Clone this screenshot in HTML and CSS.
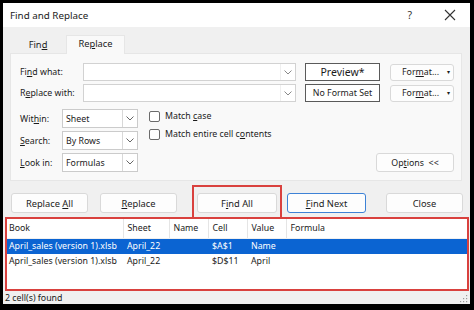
FILE: index.html
```
<!DOCTYPE html>
<html lang="en">
<head>
    <meta charset="UTF-8">
    <title>Find and Replace</title>
    <link rel="stylesheet" href="styles.css">
</head>
<body>
<div class="dialog">
    <div class="titlebar">
        <span class="title">Find and Replace</span>
        <span class="tb-help">?</span>
        <span class="tb-close">
            <svg width="12" height="12" viewBox="0 0 12 12"><path d="M1 1 L11 11 M11 1 L1 11" stroke="#333" stroke-width="1.1" fill="none"/></svg>
        </span>
    </div>

    <div class="tabs">
        <div class="tab">Fin<u>d</u></div>
        <div class="tab active">Re<u>p</u>lace</div>
    </div>

    <div class="panel">
        <div class="field-row">
            <label class="lbl">Fi<u>n</u>d what:</label>
            <div class="combo">
                <span class="combo-text"></span>
                <span class="combo-arrow"><svg width="8" height="5" viewBox="0 0 8 5"><path d="M0.5 0.5 L4 4 L7.5 0.5" stroke="#888" fill="none"/></svg></span>
            </div>
            <div class="fmt-box preview"><span>Preview*</span></div>
            <div class="btn fmt-btn"><span>For<u>m</u>at...</span><span class="caret">&#9662;</span></div>
        </div>
        <div class="field-row">
            <label class="lbl">R<u>e</u>place with:</label>
            <div class="combo">
                <span class="combo-text"></span>
                <span class="combo-arrow"><svg width="8" height="5" viewBox="0 0 8 5"><path d="M0.5 0.5 L4 4 L7.5 0.5" stroke="#888" fill="none"/></svg></span>
            </div>
            <div class="fmt-box"><span>No Format Set</span></div>
            <div class="btn fmt-btn"><span>For<u>m</u>at...</span><span class="caret">&#9662;</span></div>
        </div>

        <div class="opts">
            <label class="lbl">Wit<u>h</u>in:</label>
            <div class="select"><span>Sheet</span><span class="sel-arrow"><svg width="8" height="5" viewBox="0 0 8 5"><path d="M0.5 0.5 L4 4 L7.5 0.5" stroke="#666" fill="none"/></svg></span></div>
            <div class="checks">
                <div class="check"><span class="box"></span><span>Match <u>c</u>ase</span></div>
                <div class="check"><span class="box"></span><span>Match entire cell c<u>o</u>ntents</span></div>
            </div>

            <label class="lbl"><u>S</u>earch:</label>
            <div class="select"><span>By Rows</span><span class="sel-arrow"><svg width="8" height="5" viewBox="0 0 8 5"><path d="M0.5 0.5 L4 4 L7.5 0.5" stroke="#666" fill="none"/></svg></span></div>

            <label class="lbl"><u>L</u>ook in:</label>
            <div class="select"><span>Formulas</span><span class="sel-arrow"><svg width="8" height="5" viewBox="0 0 8 5"><path d="M0.5 0.5 L4 4 L7.5 0.5" stroke="#666" fill="none"/></svg></span></div>
            <div class="btn options-btn"><span>Op<u>t</u>ions &nbsp;&lt;&lt;</span></div>
        </div>
    </div>

    <div class="actions">
        <div class="btn act"><span>Replace <u>A</u>ll</span></div>
        <div class="btn act"><span><u>R</u>eplace</span></div>
        <div class="highlight">
            <div class="btn act"><span>F<u>i</u>nd All</span></div>
        </div>
        <div class="btn act default"><span><u>F</u>ind Next</span></div>
        <div class="btn act close"><span>Close</span></div>
    </div>

    <div class="results">
        <table class="found">
            <thead>
                <tr>
                    <th class="c-book">Book</th>
                    <th class="c-sheet">Sheet</th>
                    <th class="c-name">Name</th>
                    <th class="c-cell">Cell</th>
                    <th class="c-value">Value</th>
                    <th>Formula</th>
                </tr>
            </thead>
            <tbody>
                <tr class="selected">
                    <td>April_sales (version 1).xlsb</td>
                    <td>April_22</td>
                    <td></td>
                    <td>$A$1</td>
                    <td>Name</td>
                    <td></td>
                </tr>
                <tr>
                    <td>April_sales (version 1).xlsb</td>
                    <td>April_22</td>
                    <td></td>
                    <td>$D$11</td>
                    <td>April</td>
                    <td></td>
                </tr>
            </tbody>
        </table>
    </div>

    <div class="status">
        <span>2 cell(s) found</span>
        <svg class="grip" width="8" height="8" viewBox="0 0 8 8">
            <rect x="6" y="0" width="1.2" height="1.2" fill="#999"/>
            <rect x="3" y="3" width="1.2" height="1.2" fill="#999"/>
            <rect x="6" y="3" width="1.2" height="1.2" fill="#999"/>
            <rect x="0" y="6" width="1.2" height="1.2" fill="#999"/>
            <rect x="3" y="6" width="1.2" height="1.2" fill="#999"/>
            <rect x="6" y="6" width="1.2" height="1.2" fill="#999"/>
        </svg>
    </div>
</div>
</body>
</html>
```

FILE: styles.css
```
body {
    margin: 0;
    padding: 3px 4px 6px 3px;
    background: #000;
    font-family: "Noto Sans", "Open Sans", sans-serif;
    font-size: 8.8px;
    color: #1b1b1b;
}

u {
    text-decoration-thickness: 1px;
    text-underline-offset: 1px;
}

.dialog {
    width: 467px;
    height: 301px;
    background: #f0f0f0;
    display: flex;
    flex-direction: column;
    overflow: hidden;
}

/* title bar */
.titlebar {
    height: 24px;
    background: #fff;
    display: flex;
    align-items: center;
    padding-left: 7px;
}
.title {
    font-size: 9.8px;
    flex: 1;
}
.tb-help {
    font-size: 10.5px;
    color: #333;
    margin-right: 32px;
}
.tb-close {
    display: flex;
    margin-right: 14px;
}

/* tabs */
.tabs {
    height: 26px;
    display: flex;
    align-items: flex-end;
    padding-left: 7px;
}
.tab {
    width: 56px;
    height: 17px;
    text-align: center;
    line-height: 17px;
    font-size: 9.3px;
}
.tab.active {
    width: 57px;
    height: 18px;
    line-height: 16px;
    background: #f9f9f9;
    border: 1px solid #e6e6e6;
    border-bottom: none;
    margin-bottom: -1px;
    position: relative;
    z-index: 1;
}

/* panel */
.panel {
    margin: 0 8px 0 7px;
    height: 128px;
    box-sizing: border-box;
    background: #f9f9f9;
    border: 1px solid #e6e6e6;
    padding: 9px 7px 5px 9px;
}
.field-row {
    display: flex;
    align-items: center;
    height: 18px;
    margin-bottom: 3px;
}
.lbl {
    width: 63px;
    flex-shrink: 0;
}
.combo {
    width: 213px;
    height: 18px;
    box-sizing: border-box;
    background: #fff;
    border: 1px solid #d2d2d2;
    display: flex;
}
.combo-text {
    flex: 1;
}
.combo-arrow {
    width: 14px;
    display: flex;
    align-items: center;
    justify-content: center;
    border-left: 1px solid #efefef;
}
.fmt-box {
    margin-left: 9px;
    width: 75px;
    height: 18px;
    box-sizing: border-box;
    background: #fff;
    border: 1px solid #5a5a5a;
    display: flex;
    align-items: center;
    justify-content: center;
}
.fmt-box.preview {
    font-size: 10.5px;
}
.btn {
    background: #fdfdfd;
    border: 1px solid #d9d9d9;
    border-radius: 3px;
    box-sizing: border-box;
    display: flex;
    align-items: center;
    justify-content: center;
}
.fmt-btn {
    margin-left: 10px;
    width: 64px;
    height: 17px;
    justify-content: flex-end;
    padding-right: 3px;
    white-space: nowrap;
}
.caret {
    font-size: 6px;
    margin-left: 8px;
}

.opts {
    margin-top: 7px;
    display: grid;
    grid-template-columns: 42px 76px 1fr 78px;
    grid-template-rows: 19px 19px 19px;
    row-gap: 3px;
    align-items: center;
}
.opts .lbl {
    grid-column: 1;
}
.select {
    grid-column: 2;
    height: 19px;
    box-sizing: border-box;
    background: #fff;
    border: 1px solid #cbcbcb;
    display: flex;
    align-items: center;
    padding-left: 3px;
}
.select span:first-child {
    flex: 1;
}
.sel-arrow {
    width: 14px;
    height: 100%;
    display: flex;
    align-items: center;
    justify-content: center;
    border-left: 1px solid #d8d8d8;
}
.checks {
    grid-column: 3;
    grid-row: 1 / span 2;
    align-self: start;
    padding-left: 11px;
    padding-top: 1px;
}
.check {
    display: flex;
    align-items: center;
    height: 12px;
    margin-bottom: 6px;
}
.box {
    width: 11px;
    height: 11px;
    box-sizing: border-box;
    border: 1px solid #6b6b6b;
    border-radius: 2px;
    background: #fff;
    margin-right: 5px;
}
.options-btn {
    grid-column: 4;
    grid-row: 3;
    height: 19px;
}

/* action buttons */
.actions {
    margin-top: 4px;
    height: 34px;
    display: flex;
    align-items: flex-start;
    padding-left: 8px;
}
.act {
    margin-top: 8px;
    width: 77px;
    height: 20px;
    font-size: 9.3px;
}
.act + .act {
    margin-left: 12px;
}
.highlight {
    margin-left: 15px;
    border: 2px solid #d9413e;
    padding: 6px 3px 4px 3px;
    height: 34px;
    box-sizing: border-box;
}
.highlight .act {
    margin-top: 0;
    width: 80px;
}
.act.default {
    margin-left: 5px;
    width: 79px;
    border-color: #3d82d6;
}
.act.close {
    margin-left: 20px;
}

/* results list */
.results {
    margin: -2px 1px 0 2px;
    height: 74px;
    box-sizing: border-box;
    border: 2px solid #d9413e;
    background: #fff;
}
.found {
    width: 100%;
    border-collapse: collapse;
    table-layout: fixed;
}
.found th {
    font-weight: normal;
    text-align: left;
    height: 19px;
    padding: 0 0 0 4px;
    border-left: 1px solid #e5e5e5;
    border-bottom: 1px solid #f0f0f0;
    box-sizing: border-box;
}
.found th:first-child {
    border-left: none;
    padding-left: 2px;
}
.found td {
    height: 15px;
    padding: 0 0 0 4px;
    white-space: nowrap;
    overflow: hidden;
}
.found td:first-child {
    padding-left: 2px;
}
.c-book { width: 116px; }
.c-sheet { width: 46px; }
.c-name { width: 39px; }
.c-cell { width: 39px; }
.c-value { width: 39px; }
.selected td {
    background: #0b64d2;
    color: #fff;
}

/* status bar */
.status {
    height: 13px;
    display: flex;
    align-items: center;
    padding-left: 2px;
}
.status span {
    flex: 1;
}
.grip {
    margin-right: 2px;
    align-self: flex-end;
    margin-bottom: 1px;
}
```
